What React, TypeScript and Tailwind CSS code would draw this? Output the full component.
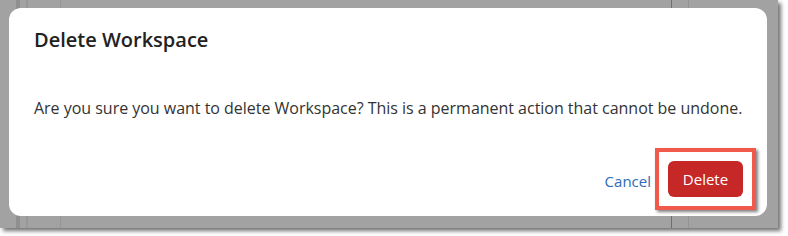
import React from "react";

export default function App() {
  return (
    <div className="w-[788px] h-[236px] bg-white overflow-hidden" style={{ fontFamily: '"Open Sans", "Noto Sans", sans-serif' }}>
      <div className="relative w-[778px] h-[228px] bg-[#a2a2a2] pl-[9px] pt-[8px] shadow-[3px_3px_4px_rgba(0,0,0,0.55)]">
        <div className="absolute left-[16px] top-0 w-[4px] h-full bg-[#8f8f8f]" />
        <div className="absolute left-[26px] top-0 w-[2px] h-full bg-[#989898]" />
        <div className="absolute left-[60px] top-0 w-[1px] h-full bg-[#959595]" />
        <div className="absolute left-[671px] top-0 w-[1px] h-full bg-[#6e6e6e]" />
        <div className="absolute left-[688px] top-0 w-[1px] h-full bg-[#939393]" />
        <div className="relative w-[758px] h-[208px] bg-white rounded-[12px] flex flex-col">
          <div className="pl-[25px] pt-[18px] text-[20px] leading-[28px] font-semibold text-[#222]">Delete Workspace</div>
          <div className="pl-[25px] pt-[42px] text-[16px] leading-[24px] text-[#333] tracking-[-0.02px]">
            Are you sure you want to delete Workspace? This is a permanent action that cannot be undone.
          </div>
          <div className="flex-1" />
          <div className="flex items-center justify-end gap-[4px] pr-[11px] pb-[6px]">
            <button className="text-[15px] text-[#2d6db5] mt-[4px]">Cancel</button>
            <div className="border-[4px] border-[#f15a4a] p-[9px] shadow-[2px_2px_3px_rgba(0,0,0,0.5)]">
              <button className="w-[75px] h-[36px] rounded-[6px] bg-[#c62828] text-white text-[15px]">Delete</button>
            </div>
          </div>
        </div>
      </div>
    </div>
  );
}
